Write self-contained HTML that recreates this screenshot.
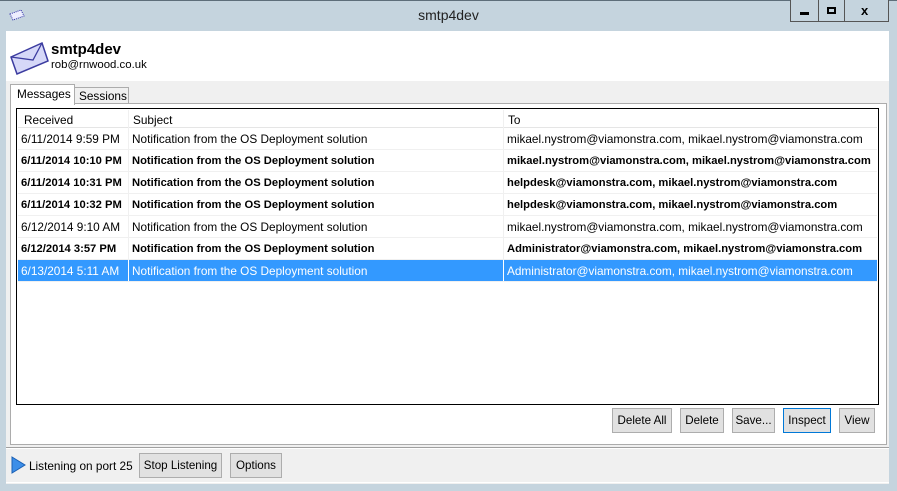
<!DOCTYPE html><html><head><style>
*{margin:0;padding:0;box-sizing:border-box}
body{width:897px;height:491px;background:#c5d4de;font-family:"Liberation Sans",sans-serif;font-size:11.8px;color:#000;position:relative;overflow:hidden}
.a{position:absolute}
.btn{position:absolute;background:#e1e1e1;border:1px solid #adadad;text-align:center;line-height:24px;font-size:11.6px}
.row{position:absolute;left:18px;width:859px;height:22px;border-bottom:1px solid #f0f0f0;line-height:23px;white-space:nowrap}
.row span{position:absolute;top:0;overflow:hidden}
.c1{left:3px;width:106px}.c2{left:114px;width:370px}.c3{left:489px;width:370px}
.row.b{font-weight:bold;font-size:11.2px}
.row.s{background:#3399ff;color:#fff}
.vl{position:absolute;top:110px;height:171px;width:1px;background:#f0f0f0}
</style></head><body>
<div class="a" style="left:0;top:0;width:897px;height:1px;background:#5e6e7a"></div>
<svg class="a" style="left:8px;top:8px" width="18" height="14"><path d="M2 6 L13 2 L16 8 L5 12 Z" fill="#eef" stroke="#33a" stroke-dasharray="1 1"/></svg>
<div class="a" style="left:0;top:7px;width:897px;text-align:center;font-size:14px;color:#222">smtp4dev</div>
<div class="a" style="left:790px;top:0;width:99px;height:22px;border:1px solid #555;border-top:none;background:#c5d4de"></div>
<div class="a" style="left:818px;top:0;width:1px;height:22px;background:#555"></div>
<div class="a" style="left:844px;top:0;width:1px;height:22px;background:#555"></div>
<div class="a" style="left:800px;top:12px;width:9px;height:3px;background:#000"></div>
<div class="a" style="left:827px;top:7px;width:9px;height:7px;border:2px solid #000"></div>
<div class="a" style="left:861px;top:3px;font-weight:bold;font-size:13px">x</div>
<div class="a" style="left:6px;top:31px;width:883px;height:453px;background:#f0f0f0"></div>
<div class="a" style="left:6px;top:31px;width:883px;height:50px;background:#fff"></div>
<svg class="a" style="left:9px;top:41px" width="40" height="34"><path d="M2 16 L33 2 L39 20 L8 33 Z" fill="#d6d8f8" stroke="#3c3ca0" stroke-width="1.5"/><path d="M2 16 L24 19 L33 2" fill="none" stroke="#3c3ca0" stroke-width="1.3"/></svg>
<div class="a" style="left:51px;top:41px;font-weight:bold;font-size:15px">smtp4dev</div>
<div class="a" style="left:51px;top:59px;font-size:11.4px">rob@rnwood.co.uk</div>
<div class="a" style="left:74px;top:87px;width:55px;height:17px;border:1px solid #acacac;border-bottom:none;background:#f0f0f0;padding-left:4px;line-height:17px">Sessions</div>
<div class="a" style="left:10px;top:103px;width:877px;height:342px;background:#fff;border:1px solid #acacac"></div>
<div class="a" style="left:10px;top:84px;width:65px;height:21px;border:1px solid #acacac;border-bottom:none;background:#fff;padding-left:6px;line-height:19px">Messages</div>
<div class="a" style="left:16px;top:108px;width:863px;height:297px;border:1px solid #000;background:#fff"></div>
<div class="a" style="left:18px;top:110px;width:859px;height:18px;border-bottom:1px solid #e5e5e5;line-height:20px">
<span class="a" style="left:6px">Received</span><span class="a" style="left:115px">Subject</span><span class="a" style="left:490px">To</span>
<div class="a" style="left:110px;top:0;width:1px;height:18px;background:#e5e5e5"></div><div class="a" style="left:485px;top:0;width:1px;height:18px;background:#e5e5e5"></div></div>
<div class="vl" style="left:128px"></div><div class="vl" style="left:503px"></div>
<div class="row" style="top:128px"><span class="c1">6/11/2014 9:59 PM</span><span class="c2">Notification from the OS Deployment solution</span><span class="c3">mikael.nystrom@viamonstra.com, mikael.nystrom@viamonstra.com</span></div>
<div class="row b" style="top:150px"><span class="c1">6/11/2014 10:10 PM</span><span class="c2">Notification from the OS Deployment solution</span><span class="c3">mikael.nystrom@viamonstra.com, mikael.nystrom@viamonstra.com</span></div>
<div class="row b" style="top:172px"><span class="c1">6/11/2014 10:31 PM</span><span class="c2">Notification from the OS Deployment solution</span><span class="c3">helpdesk@viamonstra.com, mikael.nystrom@viamonstra.com</span></div>
<div class="row b" style="top:194px"><span class="c1">6/11/2014 10:32 PM</span><span class="c2">Notification from the OS Deployment solution</span><span class="c3">helpdesk@viamonstra.com, mikael.nystrom@viamonstra.com</span></div>
<div class="row" style="top:216px"><span class="c1">6/12/2014 9:10 AM</span><span class="c2">Notification from the OS Deployment solution</span><span class="c3">mikael.nystrom@viamonstra.com, mikael.nystrom@viamonstra.com</span></div>
<div class="row b" style="top:238px"><span class="c1">6/12/2014 3:57 PM</span><span class="c2">Notification from the OS Deployment solution</span><span class="c3">Administrator@viamonstra.com, mikael.nystrom@viamonstra.com</span></div>
<div class="row s" style="top:260px"><span class="c1">6/13/2014 5:11 AM</span><span class="c2">Notification from the OS Deployment solution</span><span class="c3">Administrator@viamonstra.com, mikael.nystrom@viamonstra.com</span></div>
<div class="a" style="left:128px;top:260px;width:1px;height:21px;background:#fff"></div><div class="a" style="left:503px;top:260px;width:1px;height:21px;background:#fff"></div>
<div class="btn" style="left:612px;top:408px;width:60px;height:25px">Delete All</div>
<div class="btn" style="left:680px;top:408px;width:44px;height:25px">Delete</div>
<div class="btn" style="left:732px;top:408px;width:43px;height:25px">Save...</div>
<div class="btn" style="left:783px;top:408px;width:48px;height:25px;border-color:#0078d7">Inspect</div>
<div class="btn" style="left:839px;top:408px;width:36px;height:25px">View</div>
<div class="a" style="left:6px;top:447px;width:883px;height:2px;background:#a0a0a0;border-bottom:1px solid #fff"></div>
<div class="a" style="left:6px;top:482px;width:883px;height:1px;background:#fff"></div>
<svg class="a" style="left:11px;top:456px" width="16" height="18"><path d="M1 1 L14 9 L1 17 Z" fill="#3c8ee8" stroke="#1a5fb4"/></svg>
<div class="a" style="left:29px;top:459px">Listening on port 25</div>
<div class="btn" style="left:139px;top:453px;width:83px;height:25px">Stop Listening</div>
<div class="btn" style="left:230px;top:453px;width:52px;height:25px">Options</div>
</body></html>
